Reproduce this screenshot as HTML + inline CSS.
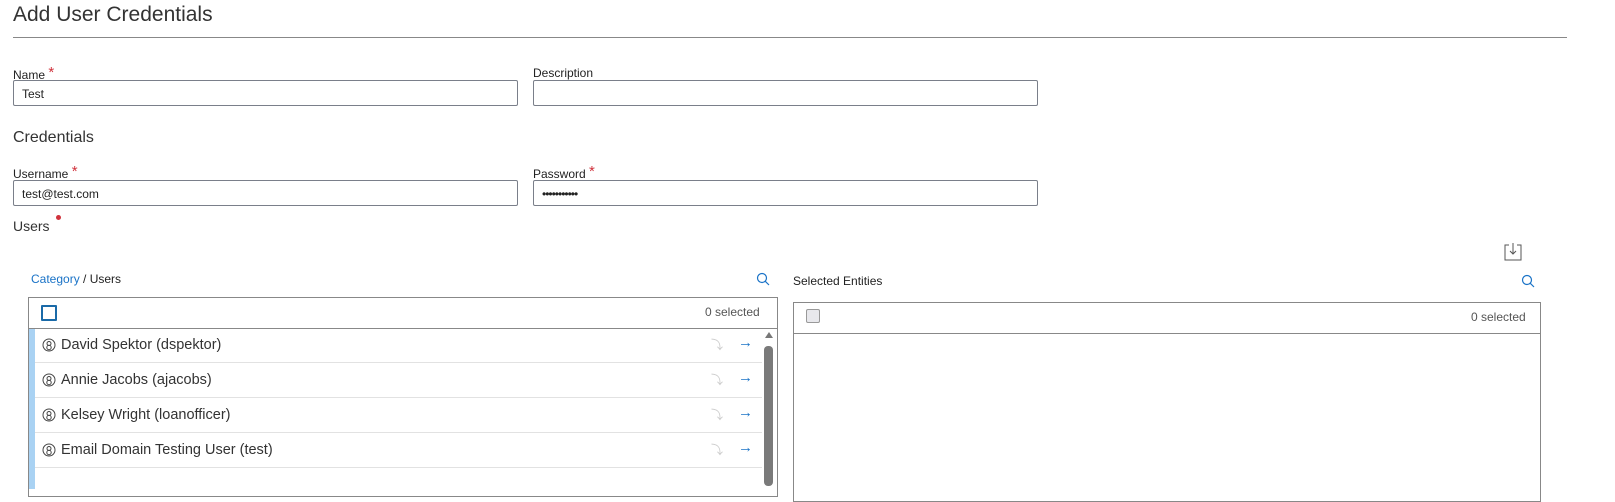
<!DOCTYPE html><html><head><style>
body{margin:0;width:1615px;height:481px;overflow:hidden;background:#fff;font-family:"Liberation Sans",sans-serif;color:#222;position:relative}
.a{position:absolute}
.lbl{font-size:12px;color:#222}
.req{color:#d0323c;font-size:15px;position:relative;top:-2px}
.inp{position:absolute;height:26px;border:1px solid #7a7f8a;border-radius:2px;box-sizing:border-box;font-size:12px;padding:6px 8px}
.row{position:absolute;left:35px;width:727px;height:35px;border-bottom:1px solid #e2e2e2;font-size:14.5px;color:#333;box-sizing:border-box}
.row .t{position:absolute;left:26px;top:9px}
.row svg.u{position:absolute;left:7px;top:10px}
.row .g{position:absolute;left:676px;top:8px;color:#ccc;font-size:12px}
.row .ar{position:absolute;left:703px;top:6px;color:#1a73c7;font-size:15px}
</style></head><body>
<div class="a" style="left:13px;top:3px;font-size:21px;color:#333">Add User Credentials</div>
<div class="a" style="left:13px;top:37px;width:1554px;height:1px;background:#888"></div>
<div class="a lbl" style="left:13px;top:66px">Name <span class="req">*</span></div>
<div class="inp" style="left:13px;top:80px;width:505px">Test</div>
<div class="a lbl" style="left:533px;top:66px">Description</div>
<div class="inp" style="left:533px;top:80px;width:505px"></div>
<div class="a" style="left:13px;top:129px;font-size:16px;color:#333">Credentials</div>
<div class="a lbl" style="left:13px;top:165px">Username <span class="req">*</span></div>
<div class="inp" style="left:13px;top:180px;width:505px">test@test.com</div>
<div class="a lbl" style="left:533px;top:165px">Password <span class="req">*</span></div>
<div class="inp" style="left:533px;top:180px;width:505px;letter-spacing:-1px">•••••••••••</div>
<div class="a" style="left:13px;top:218px;font-size:14px;color:#333">Users</div>
<div class="a" style="left:56px;top:215px;width:5px;height:5px;border-radius:50%;background:#d0323c"></div>
<div class="a" style="left:31px;top:272px;font-size:12px"><span style="color:#1a73c7">Category</span> / Users</div>
<svg class="a" style="left:756px;top:272px" width="14" height="14"><circle cx="6" cy="6" r="4.5" fill="none" stroke="#1a73c7" stroke-width="1.2"/><line x1="9.3" y1="9.3" x2="13" y2="13" stroke="#1a73c7" stroke-width="1.2"/></svg>
<div class="a" style="left:28px;top:297px;width:750px;height:200px;border:1px solid #888;box-sizing:border-box"></div>
<div class="a" style="left:29px;top:328px;width:748px;height:1px;background:#888"></div>
<div class="a" style="left:41px;top:305px;width:12px;height:12px;border:2px solid #1a6aa8;border-radius:1px"></div>
<div class="a" style="left:705px;top:305px;font-size:12px;color:#555">0 selected</div>
<div class="a" style="left:29px;top:329px;width:6px;height:160px;background:#a9d2f3"></div>
<div class="a" style="left:765px;top:332px;width:0;height:0;border-left:4px solid transparent;border-right:4px solid transparent;border-bottom:6px solid #777"></div>
<div class="a" style="left:764px;top:346px;width:9px;height:140px;background:#7a7a7a;border-radius:4px"></div>
<div class="row" style="top:328px"><svg class="u" width="14" height="14"><circle cx="7" cy="7" r="6" fill="none" stroke="#444" stroke-width="1"/><circle cx="7" cy="5.5" r="2" fill="none" stroke="#444"/><circle cx="7" cy="9.5" r="2.2" fill="none" stroke="#444"/></svg><span class="t">David Spektor (dspektor)</span><span class="g">⤵</span><span class="ar">→</span></div>
<div class="row" style="top:363px"><svg class="u" width="14" height="14"><circle cx="7" cy="7" r="6" fill="none" stroke="#444" stroke-width="1"/><circle cx="7" cy="5.5" r="2" fill="none" stroke="#444"/><circle cx="7" cy="9.5" r="2.2" fill="none" stroke="#444"/></svg><span class="t">Annie Jacobs (ajacobs)</span><span class="g">⤵</span><span class="ar">→</span></div>
<div class="row" style="top:398px"><svg class="u" width="14" height="14"><circle cx="7" cy="7" r="6" fill="none" stroke="#444" stroke-width="1"/><circle cx="7" cy="5.5" r="2" fill="none" stroke="#444"/><circle cx="7" cy="9.5" r="2.2" fill="none" stroke="#444"/></svg><span class="t">Kelsey Wright (loanofficer)</span><span class="g">⤵</span><span class="ar">→</span></div>
<div class="row" style="top:433px"><svg class="u" width="14" height="14"><circle cx="7" cy="7" r="6" fill="none" stroke="#444" stroke-width="1"/><circle cx="7" cy="5.5" r="2" fill="none" stroke="#444"/><circle cx="7" cy="9.5" r="2.2" fill="none" stroke="#444"/></svg><span class="t">Email Domain Testing User (test)</span><span class="g">⤵</span><span class="ar">→</span></div>
<svg class="a" style="left:1503px;top:242px" width="20" height="20"><path d="M6 3H2v15h16V3h-4" fill="none" stroke="#555" stroke-width="1"/><path d="M10 1v11M7 9l3 3 3-3" fill="none" stroke="#555" stroke-width="1"/></svg>
<div class="a" style="left:793px;top:274px;font-size:12px">Selected Entities</div>
<svg class="a" style="left:1521px;top:274px" width="14" height="14"><circle cx="6" cy="6" r="4.5" fill="none" stroke="#1a73c7" stroke-width="1.2"/><line x1="9.3" y1="9.3" x2="13" y2="13" stroke="#1a73c7" stroke-width="1.2"/></svg>
<div class="a" style="left:793px;top:302px;width:748px;height:200px;border:1px solid #888;box-sizing:border-box"></div>
<div class="a" style="left:794px;top:333px;width:746px;height:1px;background:#888"></div>
<div class="a" style="left:806px;top:309px;width:14px;height:14px;border:1px solid #999;background:#e8e8ec;border-radius:2px;box-sizing:border-box"></div>
<div class="a" style="left:1471px;top:310px;font-size:12px;color:#555">0 selected</div>
</body></html>
